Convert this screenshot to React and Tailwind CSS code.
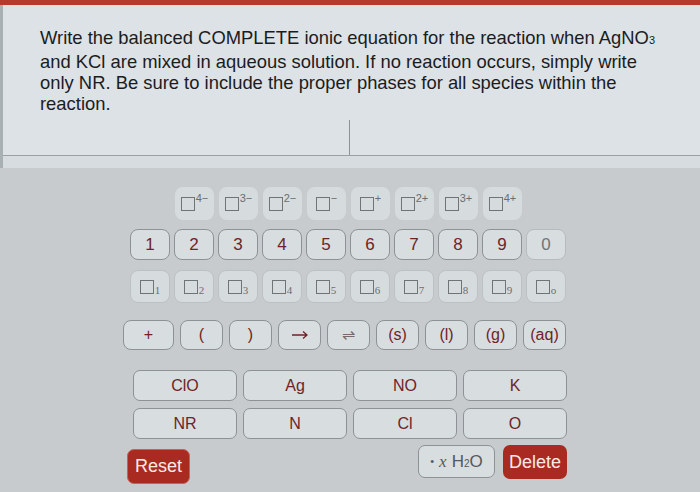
import React from 'react'

const maroon = 'text-[#6e2427]'

const charges = ['4−', '3−', '2−', '−', '+', '2+', '3+', '4+']
const digits = ['1', '2', '3', '4', '5', '6', '7', '8', '9', '0']
const symbols = ['+', '(', ')', '→', '⇌', '(s)', '(l)', '(g)', '(aq)']
const elements = [['ClO', 'Ag', 'NO', 'K'], ['NR', 'N', 'Cl', 'O']]

function Box() {
  return <span className="inline-block w-[14px] h-[14px] border border-[#6f7477] bg-transparent" />
}

function Arrow() {
  return (
    <svg width="18" height="10" viewBox="0 0 18 10" fill="none" stroke="#6e2427" strokeWidth="1.3">
      <path d="M1 5h15M12 1.5 16 5l-4 3.5" />
    </svg>
  )
}

export default function App() {
  return (
    <div
      className="w-[700px] h-[492px] overflow-hidden bg-[#c7cbcd] flex flex-col"
      style={{ fontFamily: '"Liberation Sans", Arial, sans-serif' }}
    >
      <div className="h-[5px] bg-[#b73a2c] shrink-0" />

      {/* question */}
      <div className="bg-[#dce2e6] border-l-[3px] border-[#a9b0b4] shrink-0">
        <p className="pl-[37px] w-[660px] pt-[22px] text-[18.4px] leading-[21px] text-[#1b1c1e]">
          Write the balanced COMPLETE ionic equation for the reaction when AgNO<span className="text-[11px]">3</span> and KCl are mixed in aqueous solution. If no reaction occurs, simply write only NR. Be sure to include the proper phases for all species within the reaction.
        </p>
        <div className="h-[35px] mt-[6px] flex">
          <div className="ml-[346px] w-px bg-[#8c9296]" />
        </div>
        <div className="h-px bg-[#9aa1a5]" />
        <div className="h-[12px] bg-[#d6dcdf]" />
      </div>

      {/* keyboard */}
      <div className="flex flex-col pt-[19px]">
        <div className="flex ml-[175px] gap-[5px]">
          {charges.map(c => (
            <div key={c} className="w-[39px] h-[33px] rounded-[8px] bg-[#d6dbde] flex items-center justify-center">
              <Box />
              <span className="text-[11px] text-[#6a6e71] -mt-[10px] ml-[1px] leading-none">{c}</span>
            </div>
          ))}
        </div>

        <div className="flex ml-[130px] gap-[4px] mt-[9px]">
          {digits.map(d => (
            <div
              key={d}
              className={`w-[40px] h-[31px] rounded-[8px] bg-[#d8dde0] border flex items-center justify-center text-[17px] ${d === '0' ? 'border-[#b6bbbe] text-[#6f7477]' : 'border-[#8c9295] ' + maroon}`}
            >
              {d}
            </div>
          ))}
        </div>

        <div className="flex ml-[130px] gap-[4px] mt-[10px]">
          {digits.map(d => (
            <div key={d} className="w-[40px] h-[33px] rounded-[8px] bg-[#d6dbde] border border-[#bcc1c4] flex items-center justify-center">
              <Box />
              <span
                className="text-[11px] text-[#6a6e71] mt-[8px] ml-[1px] leading-none"
                style={{ fontFamily: '"Liberation Serif", serif' }}
              >
                {d === '0' ? 'o' : d}
              </span>
            </div>
          ))}
        </div>

        <div className="flex ml-[123px] gap-[6px] mt-[17px]">
          {symbols.map((s, i) => (
            <div
              key={s}
              className={`${i === 0 ? 'w-[51px]' : 'w-[43px]'} h-[30px] rounded-[8px] bg-[#d8dde0] border border-[#8c9295] flex items-center justify-center text-[16px] ${i === 4 ? 'text-[#7a6a6c]' : maroon}`}
            >
              {i === 3 ? <Arrow /> : s}
            </div>
          ))}
        </div>

        {elements.map((row, ri) => (
          <div key={ri} className={`flex ml-[133px] gap-[6px] ${ri === 0 ? 'mt-[20px]' : 'mt-[7px]'}`}>
            {row.map(e => (
              <div key={e} className={`w-[104px] h-[31px] rounded-[7px] bg-[#d8dde0] border border-[#8c9295] flex items-center justify-center text-[16px] ${maroon}`}>
                {e}
              </div>
            ))}
          </div>
        ))}

        <div className="flex items-start ml-[127px] w-[440px] mt-[6px]">
          <div className="mt-[4px] w-[63px] h-[35px] rounded-[7px] bg-[#a92a21] border border-[#c9605a] flex items-center justify-center text-[18px] text-[#fbe9e8]">
            Reset
          </div>
          <div className="flex-1" />
          <div className="w-[77px] h-[33px] rounded-[7px] bg-[#d8dde0] border border-[#8c9295] flex items-center justify-center gap-[5px] text-[17px] text-[#55595c]">
            <span className="text-[11px]">•</span>
            <span className="italic" style={{ fontFamily: '"Liberation Serif", serif' }}>x</span>
            <span>H<span className="text-[10px]">2</span>O</span>
          </div>
          <div className="ml-[8px] w-[64px] h-[34px] rounded-[7px] bg-[#a92a21] flex items-center justify-center text-[18px] text-[#fbe9e8]">
            Delete
          </div>
        </div>
      </div>
    </div>
  )
}
